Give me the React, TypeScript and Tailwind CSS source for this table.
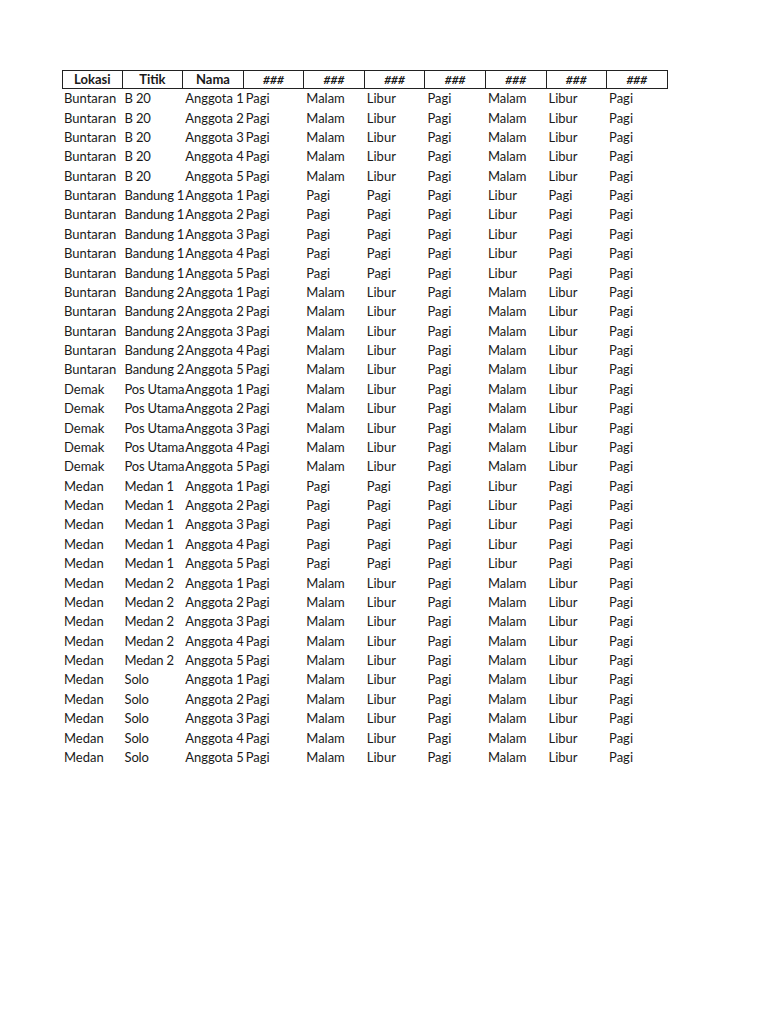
const groups = [
  { lokasi: "Buntaran", titik: "B 20", shift: ["Pagi", "Malam", "Libur", "Pagi", "Malam", "Libur", "Pagi"] },
  { lokasi: "Buntaran", titik: "Bandung 1", shift: ["Pagi", "Pagi", "Pagi", "Pagi", "Libur", "Pagi", "Pagi"] },
  { lokasi: "Buntaran", titik: "Bandung 2", shift: ["Pagi", "Malam", "Libur", "Pagi", "Malam", "Libur", "Pagi"] },
  { lokasi: "Demak", titik: "Pos Utama", shift: ["Pagi", "Malam", "Libur", "Pagi", "Malam", "Libur", "Pagi"] },
  { lokasi: "Medan", titik: "Medan 1", shift: ["Pagi", "Pagi", "Pagi", "Pagi", "Libur", "Pagi", "Pagi"] },
  { lokasi: "Medan", titik: "Medan 2", shift: ["Pagi", "Malam", "Libur", "Pagi", "Malam", "Libur", "Pagi"] },
  { lokasi: "Medan", titik: "Solo", shift: ["Pagi", "Malam", "Libur", "Pagi", "Malam", "Libur", "Pagi"] },
];

const headers = ["Lokasi", "Titik", "Nama", "###", "###", "###", "###", "###", "###", "###"];

const rows = groups.flatMap((g) =>
  [1, 2, 3, 4, 5].map((n) => [g.lokasi, g.titik, `Anggota ${n}`, ...g.shift])
);

export default function App() {
  return (
    <div
      className="min-h-screen bg-white text-[#1a1a1a] pt-[70px] pl-[62px]"
      style={{ fontFamily: "Lato, 'Open Sans', sans-serif" }}
    >
      <div className="grid grid-cols-[repeat(10,60.57px)] text-[13px] leading-none">
        {headers.map((h, i) => (
          <div
            key={i}
            className={`h-[19px] flex items-center justify-center border-y border-[#222] ${
              i === 0 ? "border-x" : "border-r"
            } font-bold ${h === "###" ? "italic text-[12px]" : ""}`}
          >
            {h}
          </div>
        ))}
        {rows.map((r, ri) =>
          r.map((c, ci) => (
            <div
              key={`${ri}-${ci}`}
              className={`h-[19.38px] flex items-center pl-[2px] whitespace-nowrap ${
                ci === 1 ? "tracking-[-0.2px]" : ""
              }`}
            >
              {c}
            </div>
          ))
        )}
      </div>
    </div>
  );
}
